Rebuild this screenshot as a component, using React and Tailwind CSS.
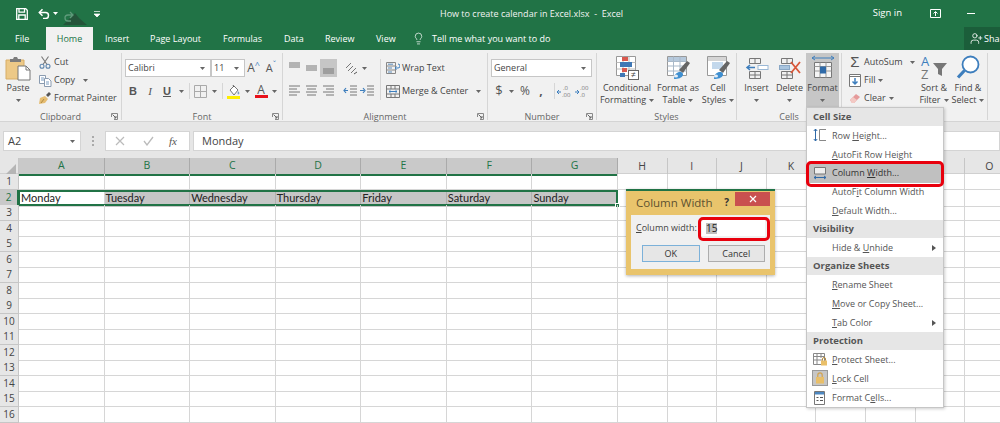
import { Lightbulb, UserPlus } from "lucide-react";

const columns = ["A", "B", "C", "D", "E", "F", "G", "H", "I", "J", "K", "L", "M", "N", "O"];
const days = ["Monday", "Tuesday", "Wednesday", "Thursday", "Friday", "Saturday", "Sunday"];
const rows = [1, 2, 3, 4, 5, 6, 7, 8, 9, 10, 11, 12, 13, 14, 15, 16];

function Caret({ light }) {
  return (
    <svg width="5" height="3" viewBox="0 0 5 3" className="shrink-0">
      <path d="M0 0h5L2.5 3z" fill={light ? "#fff" : "#666"} />
    </svg>
  );
}

function CaretCell() {
  return <div className="w-[8px] h-full flex items-center justify-center"><Caret /></div>;
}

function Cell({ children }) {
  return <div className="w-[16px] h-full flex items-center justify-center shrink-0">{children}</div>;
}

function Launcher() {
  return (
    <svg width="7" height="7" viewBox="0 0 7 7" className="absolute right-[3px] top-[3px]">
      <path d="M.5 4V.5H6.5V6.500H3" fill="none" stroke="#888" />
      <path d="M1.500 1.500L5 5M5 3v2H3" fill="none" stroke="#666" />
    </svg>
  );
}

function Group({ label, launcher, width, children }) {
  return (
    <div className={`${width} h-[67px] border-r border-[#d6d6d6] flex flex-col shrink-0`}>
      <div className="h-[57px] flex">{children}</div>
      <div className="relative h-[10px] leading-[13px] text-center text-[#666]">
        {label}
        {launcher && <Launcher />}
      </div>
    </div>
  );
}

function SmallRow({ icon, children, className = "" }) {
  return (
    <div className={`h-[18px] flex items-center whitespace-nowrap text-[#444] ${className}`}>
      <div className="w-[14px] h-[14px] mr-[2px] flex items-center justify-center shrink-0">{icon}</div>
      {children}
    </div>
  );
}

function BigButton({ icon, width, lines, caret = true, inlineCaret = false, active = false }) {
  return (
    <div className={`${width} ${active ? "bg-[#c6c6c6]" : ""} h-[54px] pt-[2px] flex flex-col items-center text-[#444] leading-[12px] shrink-0`}>
      <div className="h-[26px] flex items-center">{icon}</div>
      <div className="mt-[1px] text-center whitespace-nowrap">{lines[0]}</div>
      {lines[1] ? (
        <div className="flex items-center gap-[3px] whitespace-nowrap">
          {lines[1]}
          {inlineCaret && <Caret />}
        </div>
      ) : (
        caret && <div className="h-[12px] flex items-center"><Caret /></div>
      )}
    </div>
  );
}

function Lines({ top = false, mid = false, bottom = false, align = "left" }) {
  const rowsY = top ? [2, 4, 6] : mid ? [5, 7, 9] : bottom ? [8, 10, 12] : [2, 5, 8, 11];
  return (
    <svg width="13" height="14" viewBox="0 0 13 14">
      {rowsY.map((y, i) => {
        const short = rowsY.length === 4 && i % 2 === 1;
        const x1 = align === "right" && short ? 4 : align === "center" && short ? 2 : 1;
        const x2 = align === "left" && short ? 9 : align === "center" && short ? 11 : 12;
        return <line key={y} x1={x1} x2={x2} y1={y} y2={y} stroke="#777" />;
      })}
    </svg>
  );
}

function SaveIcon() {
  return (
    <svg width="12" height="12" viewBox="0 0 12 12" fill="none" stroke="#fff" strokeWidth="1.3">
      <path d="M.7.7h9l1.600 1.600v9H.7z" />
      <path d="M3 .7v3.500h5.500V.7M2.800 11.200V7h6.400v4.200" />
    </svg>
  );
}

function UndoIcon() {
  return (
    <svg width="12" height="11" viewBox="0 0 12 11" fill="none" stroke="#fff" strokeWidth="1.5">
      <path d="M1.500 4.500h6a3 3 0 0 1 0 6H5" />
      <path d="M4.500 1.200L1.300 4.500l3.200 3.200" />
    </svg>
  );
}

function RedoIcon() {
  return (
    <svg width="26" height="14" viewBox="0 0 26 14" fill="none">
      <path d="M1 14L8 7 13 2 17 7 25 14z" fill="#24543a" />
      <path d="M10 4H6a3 3 0 0 0 0 6h3M8 1l3 3-3 3" stroke="#5e9a7a" strokeWidth="1.3" />
    </svg>
  );
}

function PasteIcon() {
  return (
    <svg width="26" height="25" viewBox="0 0 26 25">
      <path d="M1 4h18v19H1z" fill="#edc987" stroke="#d7ad66" />
      <path d="M5 3h3l1-2h3l1 2h3v3H5z" fill="#7c7c7c" />
      <path d="M13 10h8l4 4v10H13z" fill="#fff" stroke="#777" />
      <path d="M21 10v4h4" fill="none" stroke="#777" />
    </svg>
  );
}

function CutIcon() {
  return (
    <svg width="12" height="13" viewBox="0 0 12 13" fill="none" stroke="#5f86ad" strokeWidth="1.1">
      <path d="M2.500 .5L8 8.500M9.500 .5L4 8.500" stroke="#777" />
      <circle cx="3" cy="10.300" r="2" />
      <circle cx="9" cy="10.300" r="2" />
    </svg>
  );
}

function CopyIcon() {
  return (
    <svg width="13" height="13" viewBox="0 0 13 13" fill="#fff" stroke="#8a9bb0">
      <path d="M.5 1.500h6v8h-6z" />
      <path d="M5.500 4.500h4l2.500 2.500v5.500H5.500z" />
      <path d="M2 4h3M2 6h3M7 8h3M7 10h3" stroke="#7a9cc0" />
    </svg>
  );
}

function PainterIcon() {
  return (
    <svg width="14" height="13" viewBox="0 0 14 13">
      <path d="M1 12l1-6 5-2 3 3-3 4z" fill="#e5bd72" />
      <path d="M8 3l2 2 3-3-2-2z" fill="#555" />
      <path d="M3 11l3-4" stroke="#b08a42" fill="none" />
    </svg>
  );
}

function BordersIcon() {
  return (
    <svg width="13" height="13" viewBox="0 0 13 13" fill="none" stroke="#aaa">
      <path d="M.5.500h12v12H.5zM6.500.5v12M.5 6.500h12" />
    </svg>
  );
}

function FillIcon() {
  return (
    <svg width="14" height="15" viewBox="0 0 14 15">
      <path d="M3 6l4-4 4 4-4 5z" fill="#fff" stroke="#777" />
      <path d="M6 1l1 2" stroke="#555" />
      <path d="M11 7c1 1.300 2 2 1 3s-2 0-1-3z" fill="#7c9cbc" />
      <rect x="0" y="12" width="13" height="3" fill="#ffee00" />
    </svg>
  );
}

function OrientIcon() {
  return (
    <svg width="13" height="13" viewBox="0 0 13 13" fill="none" stroke="#777">
      <path d="M1 6l5-5M3 9l5-5M6 11l5-5" />
      <path d="M9 12l3-2" stroke="#555" />
    </svg>
  );
}

function IndentIcon({ flip }) {
  return (
    <svg width="14" height="12" viewBox="0 0 14 12" fill="none">
      <path d="M7 1h7M7 4h7M7 7h7M7 10h7" stroke="#777" />
      {flip ? (
        <path d="M0 5.500h4M3 3l2 2.500L3 8" stroke="#3d7ebd" strokeWidth="1.200" />
      ) : (
        <path d="M5 5.500H1M3 3L1 5.500 3 8" stroke="#3d7ebd" strokeWidth="1.200" />
      )}
    </svg>
  );
}

function WrapIcon() {
  return (
    <svg width="14" height="13" viewBox="0 0 14 13" fill="none" stroke="#888">
      <path d="M.5.500h9v11h-9zM.5 4h9M.5 8h9" />
      <path d="M2 2.200h5M2 6h4M2 10h4" stroke="#5b8bbb" />
      <path d="M9 6h3a1 1 0 0 0 0-4M10.500 4.500L9 6l1.500 1.500" stroke="#3d7ebd" />
    </svg>
  );
}

function MergeIcon() {
  return (
    <svg width="14" height="13" viewBox="0 0 14 13" fill="none" stroke="#777">
      <path d="M.5.500h13v12H.5zM.5 4h13M.5 9h13M5 .5V4M9 .5V4M5 9v3.500M9 9v3.500" />
      <path d="M3 6.500h8M4.500 5.200L3 6.500l1.500 1.300M9.500 5.200L11 6.500 9.500 7.800" stroke="#3d7ebd" />
    </svg>
  );
}

function DecimalIcon({ more }) {
  return (
    <svg width="16" height="14" viewBox="0 0 16 14">
      <text x={more ? 5 : 6} y="6" fontSize="6" fill="#777">{more ? ".00" : ".0"}</text>
      <text x="5" y="13" fontSize="6" fill="#777">{more ? ".0" : ".00"}</text>
      <path d="M0 8h4M2 6l-2 2 2 2" fill="none" stroke="#3d7ebd" transform={more ? "rotate(180 2 8)" : undefined} />
    </svg>
  );
}

function TableBase({ children }) {
  return (
    <svg width="26" height="26" viewBox="0 0 26 26">
      <path d="M2.500 1.500h19v19h-19z" fill="#fff" stroke="#999" />
      {children}
    </svg>
  );
}

function ConditionalIcon() {
  return (
    <TableBase>
      <path d="M2.500 7.500h19M2.500 14h19M9 1.500v19M15 1.500v19" stroke="#bbb" fill="none" />
      <rect x="8" y="2" width="6" height="4" fill="#d9584e" />
      <rect x="6" y="7" width="12" height="5" fill="#3f77b5" />
      <rect x="8" y="13" width="5" height="4" fill="#d9584e" />
      <rect x="6" y="18" width="5" height="4" fill="#3f77b5" />
      <rect x="14.500" y="15.500" width="10" height="9" fill="#fff" stroke="#666" />
      <text x="16.500" y="23" fontSize="9" fill="#444">≠</text>
    </TableBase>
  );
}

function Brush() {
  return (
    <>
      <path d="M14 15L22 6l3 2-7 10z" fill="#666" />
      <path d="M9 24c0-5 3-7 6-7s3 2 3 3c-1 3-5 4-9 4z" fill="#3f8fd0" />
      <ellipse cx="11" cy="21" rx="2" ry="1.500" fill="#e4eef7" />
    </>
  );
}

function FormatTableIcon() {
  return (
    <TableBase>
      <rect x="3" y="2" width="18" height="4" fill="#b6c9dc" />
      <path d="M2.500 6.500h19M2.500 11h19M2.500 16h19M8.500 1.500v19M15 1.500v19" stroke="#a9b9c9" fill="none" />
      <Brush />
    </TableBase>
  );
}

function CellStylesIcon() {
  return (
    <TableBase>
      <rect x="3" y="2" width="18" height="4" fill="#d5d5d5" />
      <rect x="7" y="7" width="11" height="7" fill="#c3d8ec" />
      <Brush />
    </TableBase>
  );
}

function InsertIcon() {
  return (
    <svg width="24" height="24" viewBox="0 0 24 24" fill="none">
      <path d="M4.500 2.500h11v5h-11zM10 2.500v5M4.500 15.500h11v7h-11zM10 15.500v7M4.500 19h11" stroke="#777" />
      <rect x="13" y="9.500" width="10" height="4" fill="#fff" stroke="#9ab8d6" />
      <path d="M2 11.500h8M5 9L2 11.500 5 14" stroke="#3d7ebd" strokeWidth="1.500" />
    </svg>
  );
}

function DeleteIcon() {
  return (
    <svg width="24" height="24" viewBox="0 0 24 24" fill="none">
      <path d="M3.500 2.500h11v5h-11zM9 2.500v5M3.500 15.500h11v7h-11zM9 15.500v7M3.500 19h11" stroke="#777" />
      <rect x="1.500" y="9.500" width="10" height="4" fill="#a9c4de" stroke="#8aa8c6" />
      <path d="M13 6l9 11M22 6l-9 11" stroke="#d9583a" strokeWidth="1.800" />
    </svg>
  );
}

function FormatIcon() {
  return (
    <svg width="24" height="26" viewBox="0 0 24 26" fill="none">
      <path d="M1 3h22M1 3l3-2M1 3l3 2M23 3l-3-2M23 3l-3 2" stroke="#3d7ebd" />
      <path d="M3.500 7.500h17v15h-17z" fill="#f5f5f5" stroke="#777" />
      <path d="M3.500 11.500h17M3.500 16h17M9 7.500v15M15 7.500v15" stroke="#999" />
      <rect x="9" y="11.500" width="6" height="7" fill="#2f6aa8" />
    </svg>
  );
}

function FillDownIcon() {
  return (
    <svg width="12" height="13" viewBox="0 0 12 13" fill="none">
      <path d="M.5.500h11v12H.5z" fill="#fff" stroke="#777" />
      <path d="M.5 2.500h11" stroke="#777" />
      <path d="M6 4v6M3.500 7.500L6 10l2.500-2.500" stroke="#3d7ebd" strokeWidth="1.500" />
    </svg>
  );
}

function EraserIcon() {
  return (
    <svg width="12" height="12" viewBox="0 0 12 12">
      <path d="M1 8l6-6 4 3-6 6H3z" fill="#e59a9a" />
      <path d="M1 8l3-3 4 3-3 3H3z" fill="#f3c9c4" />
    </svg>
  );
}

function SortIcon() {
  return (
    <svg width="28" height="26" viewBox="0 0 28 26">
      <text x="1" y="11" fontSize="13" fill="#3d7ebd" fontFamily="Open Sans, sans-serif">A</text>
      <text x="1" y="24" fontSize="13" fill="#777" fontFamily="Open Sans, sans-serif">Z</text>
      <path d="M13 8h14l-5 6v7l-4-2v-5z" fill="#777" />
    </svg>
  );
}

function FindIcon() {
  return (
    <svg width="24" height="26" viewBox="0 0 24 26" fill="none" stroke="#3d7ebd">
      <circle cx="14.500" cy="9.500" r="8" fill="#fff" strokeWidth="1.800" />
      <path d="M8.500 15.500L2 22.500" strokeWidth="3.200" />
    </svg>
  );
}

function RowHeightIcon() {
  return (
    <svg width="14" height="14" viewBox="0 0 14 14" fill="none">
      <path d="M13 1.500H6.500v11H13" stroke="#888" />
      <path d="M2.500 1v12M.8 3l1.700-2 1.700 2M.8 11l1.700 2 1.700-2" stroke="#2f6aa8" />
    </svg>
  );
}

function ColWidthIcon() {
  return (
    <svg width="14" height="14" viewBox="0 0 14 14" fill="none">
      <path d="M1.500 8V1.500h11V8z" fill="#eee" stroke="#777" />
      <path d="M1 11.500h12M1 11.500l2-1.500M1 11.500L3 13M13 11.500L11 10M13 11.500L11 13" stroke="#2f6aa8" />
    </svg>
  );
}

function ProtectIcon() {
  return (
    <svg width="14" height="14" viewBox="0 0 14 14" fill="none">
      <path d="M.5 1.500h11v11H.5zM.5 4.500h11M.5 8h9M4 1.500v11M8 1.500V6" stroke="#888" />
      <rect x="8" y="8.500" width="6" height="5" fill="#e9bf69" />
      <path d="M9.500 8.500V7a1.500 1.500 0 0 1 3 0v1.500" stroke="#b58a3a" />
    </svg>
  );
}

function LockIcon() {
  return (
    <svg width="10" height="12" viewBox="0 0 10 12" fill="none">
      <rect x="1" y="5" width="8" height="6.500" fill="#e9bf69" />
      <path d="M2.800 5V3a2.200 2.200 0 0 1 4.400 0v2" stroke="#d2a24e" strokeWidth="1.200" />
    </svg>
  );
}

function FormatCellsIcon() {
  return (
    <svg width="13" height="14" viewBox="0 0 13 14" fill="none">
      <path d="M1.500.500h10v13h-10z" fill="#fff" stroke="#777" />
      <rect x="2" y="1" width="9" height="2.500" fill="#4d87c0" />
      <path d="M3.500 6.500h2M7 6.500h3M3.500 9.500h2M7 9.500h3" stroke="#555" />
    </svg>
  );
}

function TitleBar() {
  return (
    <div className="h-[27px] bg-[#217346] text-white flex items-center shrink-0">
      <div className="ml-[16px]"><SaveIcon /></div>
      <div className="ml-[10px]"><UndoIcon /></div>
      <div className="ml-[3px]"><Caret light /></div>
      <div className="ml-[4px] mt-[8px]"><RedoIcon /></div>
      <div className="ml-[6px]"><svg width="6" height="6" viewBox="0 0 6 6"><path d="M0 .5h6M0 3h6L3 6z" stroke="#fff" fill="#fff" strokeWidth=".7" /></svg></div>
      <div className="ml-[340px] whitespace-nowrap text-[#f2f2f2]">
        How to create calendar in Excel.xlsx&nbsp; - &nbsp;Excel
      </div>
      <div className="ml-auto flex items-center">
        <span className="text-[9.500px]">Sign in</span>
        <svg width="11" height="9" viewBox="0 0 11 9" className="ml-[28px]" fill="none" stroke="#fff">
          <path d="M.5.500h10v8H.5z" />
          <path d="M5.500 7V3M3.500 4.500l2-2 2 2" />
        </svg>
        <div className="ml-[26px] mr-[25px] w-[8px] h-px bg-white" />
      </div>
    </div>
  );
}

function TabBar() {
  return (
    <div className="h-[23px] bg-[#217346] text-white flex items-center shrink-0 whitespace-nowrap">
      <span className="ml-[15px] w-[31px]">File</span>
      <div className="w-[47px] h-full bg-[#f1f1f1] text-[#217346] flex items-center justify-center">Home</div>
      <span className="ml-[12px] w-[45px]">Insert</span>
      <span className="w-[73px]">Page Layout</span>
      <span className="w-[61px]">Formulas</span>
      <span className="w-[41px]">Data</span>
      <span className="w-[51px]">Review</span>
      <span className="w-[36px]">View</span>
      <Lightbulb size={13} strokeWidth={1.300} />
      <span className="ml-[7px]">Tell me what you want to do</span>
      <div className="ml-auto w-[36px] h-full bg-[#1b5e3a] flex items-center pl-[6px] overflow-hidden">
        <UserPlus size={13} strokeWidth={1.500} className="shrink-0" />
        <span className="ml-px">Share</span>
      </div>
    </div>
  );
}

function Select({ width, label }) {
  return (
    <div className={`${width} h-[18px] bg-white border border-[#c6c6c6] flex items-center justify-between pl-[2px] pr-[5px] text-[#444]`}>
      {label}
      <Caret />
    </div>
  );
}

function Ribbon() {
  return (
    <div className="h-[72px] bg-[#f1f1f1] border-b border-[#d4d4d4] pt-[3px] flex shrink-0">
      <Group label="Clipboard" launcher width="w-[122px]">
        <BigButton width="w-[36px]" icon={<PasteIcon />} lines={["Paste"]} />
        <div className="ml-[2px]">
          <SmallRow icon={<CutIcon />}>Cut</SmallRow>
          <SmallRow icon={<CopyIcon />}>Copy<span className="ml-[8px]"><Caret /></span></SmallRow>
          <SmallRow icon={<PainterIcon />}>Format Painter</SmallRow>
        </div>
      </Group>

      <Group label="Font" launcher width="w-[161px]">
        <div className="pl-[3px] pt-[6px] flex flex-col gap-[5px]">
          <div className="h-[18px] flex items-center">
            <Select width="w-[86px]" label="Calibri" />
            <Select width="w-[34px]" label="11" />
            <div className="w-[17px] text-center text-[12px] text-[#555]">A<sup className="text-[#3d7ebd]">^</sup></div>
            <div className="w-[18px] text-center text-[11px] text-[#555]">A<sup className="text-[#3d7ebd]">ˇ</sup></div>
          </div>
          <div className="h-[18px] flex items-center text-[#555]">
            <Cell><b className="text-[11px] font-['Liberation_Sans',sans-serif]">B</b></Cell>
            <div className="ml-px h-full"><Cell><i className="text-[11px] font-['Liberation_Serif',serif]">I</i></Cell></div>
            <div className="ml-px h-full"><Cell><span className="text-[11px] font-bold underline font-['Liberation_Sans',sans-serif]">U</span></Cell></div>
            <div className="ml-[2px] h-full"><CaretCell /></div>
            <div className="ml-[4px] w-px h-[16px] bg-[#d6d6d6]" />
            <div className="ml-[2px] h-full"><Cell><BordersIcon /></Cell></div>
            <div className="ml-[2px] h-full"><CaretCell /></div>
            <div className="ml-[4px] w-px h-[16px] bg-[#d6d6d6]" />
            <div className="ml-[3px] h-full"><Cell><FillIcon /></Cell></div>
            <div className="ml-px h-full"><CaretCell /></div>
            <div className="ml-[2px] h-full">
              <Cell>
                <div className="flex flex-col items-center leading-[11px] text-[12px] text-[#555]">
                  A<div className="w-[13px] h-[3px] bg-[#e8121b]" />
                </div>
              </Cell>
            </div>
            <div className="ml-px h-full"><CaretCell /></div>
          </div>
        </div>
      </Group>

      <Group label="Alignment" launcher width="w-[205px]">
        <div className="pl-[3px] pt-[6px] flex flex-col gap-[5px] w-[94px]">
          <div className="h-[18px] flex items-center">
            <div className="w-[17px] flex justify-center"><Lines top /></div>
            <div className="w-[17px] flex justify-center"><Lines mid /></div>
            <div className="w-[17px] h-full bg-[#c6c6c6] flex items-center justify-center"><Lines bottom /></div>
            <div className="ml-[8px]"><OrientIcon /></div>
            <div className="ml-[4px]"><Caret /></div>
          </div>
          <div className="h-[18px] flex items-center">
            <div className="w-[17px] flex justify-center"><Lines /></div>
            <div className="w-[17px] flex justify-center"><Lines align="center" /></div>
            <div className="w-[17px] flex justify-center"><Lines align="right" /></div>
            <div className="ml-[6px] w-[17px]"><IndentIcon /></div>
            <div className="w-[17px]"><IndentIcon flip /></div>
          </div>
        </div>
        <div className="ml-[3px] mt-[6px] w-px h-[41px] bg-[#d6d6d6]" />
        <div className="ml-[5px] pt-[6px] flex flex-col gap-[5px]">
          <SmallRow icon={<WrapIcon />}>Wrap Text</SmallRow>
          <SmallRow icon={<MergeIcon />}>Merge &amp; Center<span className="ml-[8px]"><Caret /></span></SmallRow>
        </div>
      </Group>

      <Group label="Number" launcher width="w-[109px]">
        <div className="pl-[3px] pt-[6px] flex flex-col gap-[5px]">
          <Select width="w-[101px]" label="General" />
          <div className="h-[18px] flex items-center text-[#555]">
            <Cell><span className="text-[13px]">$</span></Cell>
            <CaretCell />
            <div className="ml-[2px] h-full"><Cell><span className="text-[12px]">%</span></Cell></div>
            <Cell><b className="text-[12px]">,</b></Cell>
            <div className="ml-[5px] w-px h-[16px] bg-[#d6d6d6]" />
            <div className="ml-[2px] h-full"><Cell><DecimalIcon /></Cell></div>
            <div className="ml-[2px] h-full"><Cell><DecimalIcon more /></Cell></div>
          </div>
        </div>
      </Group>

      <Group label="Styles" width="w-[140px]">
        <BigButton width="w-[60px]" icon={<ConditionalIcon />} lines={["Conditional", "Formatting"]} inlineCaret />
        <BigButton width="w-[42px]" icon={<FormatTableIcon />} lines={["Format as", "Table"]} inlineCaret />
        <BigButton width="w-[38px]" icon={<CellStylesIcon />} lines={["Cell", "Styles"]} inlineCaret />
      </Group>

      <Group label="Cells" width="w-[105px]">
        <div className="w-[3px]" />
        <BigButton width="w-[33px]" icon={<InsertIcon />} lines={["Insert"]} />
        <BigButton width="w-[33px]" icon={<DeleteIcon />} lines={["Delete"]} />
        <BigButton width="w-[33px]" icon={<FormatIcon />} lines={["Format"]} active />
      </Group>

      <Group label="Editing" width="w-[146px]">
        <div className="w-[74px] pl-[6px]">
          <SmallRow icon={<span className="text-[15px] font-['Liberation_Sans',sans-serif] text-[#555]">Σ</span>}>AutoSum<span className="ml-[7px]"><Caret /></span></SmallRow>
          <SmallRow icon={<FillDownIcon />}>Fill<span className="ml-[3px]"><Caret /></span></SmallRow>
          <SmallRow icon={<EraserIcon />}>Clear<span className="ml-[3px]"><Caret /></span></SmallRow>
        </div>
        <BigButton width="w-[36px]" icon={<SortIcon />} lines={["Sort &", "Filter"]} inlineCaret />
        <BigButton width="w-[32px]" icon={<FindIcon />} lines={["Find &", "Select"]} inlineCaret />
      </Group>
    </div>
  );
}

function FormulaBar() {
  return (
    <div className="h-[36px] bg-[#e6e6e6] pt-[9px] flex text-[#444] shrink-0">
      <div className="ml-[3px] w-[78px] h-[20px] bg-white border border-[#d4d4d4] flex items-center justify-between pl-[4px] pr-[5px] text-[11px]">
        A2
        <Caret />
      </div>
      <div className="ml-[11px] w-[3px] h-[10px] mt-[5px] border-l-2 border-dotted border-[#aaa]" />
      <div className="ml-[10px] w-[85px] h-[20px] bg-white border border-[#d4d4d4] flex items-center text-[#bbb]">
        <svg width="10" height="10" viewBox="0 0 10 10" className="ml-[9px]" fill="none" stroke="#bbb" strokeWidth="1.200"><path d="M1 1l8 8M9 1L1 9" /></svg>
        <svg width="11" height="10" viewBox="0 0 11 10" className="ml-[18px]" fill="none" stroke="#bbb" strokeWidth="1.300"><path d="M1 5l3 4 6-8" /></svg>
        <i className="ml-[15px] text-[#555] font-['Liberation_Serif',serif] text-[11px]">fx</i>
      </div>
      <div className="ml-[3px] flex-1 h-[20px] bg-white border border-[#d4d4d4] flex items-center pl-[8px] text-[11px]">Monday</div>
    </div>
  );
}

function Sheet() {
  return (
    <div className="flex-1 bg-white overflow-hidden font-['Lato',sans-serif]">
      <div className="grid grid-cols-[19px_repeat(7,85.57px)_repeat(8,49.6px)] h-[16px] bg-[#e6e6e6] border-b border-[#d0d0d0]">
        <div className="border-r border-[#c6c6c6] flex items-end justify-end pr-[2px] pb-[2px]">
          <svg width="10" height="10" viewBox="0 0 10 10"><path d="M10 0v10H0z" fill="#b5b5b5" /></svg>
        </div>
        {columns.map((col, i) => (
          <div
            key={col}
            className={i < 7
              ? "bg-[#c9c9c9] text-[#217346] border-r border-[#aaa] border-b-2 border-b-[#217346] flex items-center justify-center text-[10.500px] font-['Open_Sans',sans-serif]"
              : "text-[#444] border-r border-[#c6c6c6] flex items-center justify-center text-[10.500px] font-['Open_Sans',sans-serif]"}
          >
            {col}
          </div>
        ))}
      </div>
      {rows.map((row) => (
        <div key={row} className="relative grid grid-cols-[19px_repeat(7,85.57px)_repeat(8,49.6px)] h-[15.5px]">
          <div className={row === 2
            ? "bg-[#c9c9c9] text-[#217346] border-r-2 border-r-[#217346] border-b border-[#aaa] flex items-center justify-center text-[10px] font-['Open_Sans',sans-serif]"
            : "bg-[#e6e6e6] text-[#444] border-r border-b border-[#c6c6c6] flex items-center justify-center text-[10px] font-['Open_Sans',sans-serif]"}
          >
            {row}
          </div>
          {columns.map((col, i) => (
            <div
              key={col}
              className={row === 2 && i > 0 && i < 7
                ? "bg-[#c6c6c6] border-r border-[#b0b0b0] flex items-center pl-[1px] text-[11px] text-[#222] whitespace-nowrap"
                : "border-r border-b border-[#d6d6d6] flex items-center pl-[2px] text-[11px] text-[#222] whitespace-nowrap"}
            >
              {row === 2 && days[i]}
            </div>
          ))}
          {row === 2 && (
            <div className="absolute left-[18px] top-0 w-[600px] h-[16.500px] border-2 border-[#217346] pointer-events-none">
              <div className="absolute right-[-4px] bottom-[-4px] w-[5px] h-[5px] bg-[#217346] border border-white" />
            </div>
          )}
        </div>
      ))}
    </div>
  );
}

function ColumnDialog() {
  return (
    <div className="absolute left-[626px] top-[189px] w-[149px] h-[86px] bg-[#e9c46c] border-t-2 border-[#217346] px-[5px] shadow-[0_1px_3px_rgba(0,0,0,0.3)]">
      <div className="h-[24px] flex items-start whitespace-nowrap">
        <span className="ml-[5px] w-[90px] mt-[3px] text-[11.500px] leading-[18px] text-[#5d5130]">Column Width</span>
        <b className="mt-[4px] w-[6px] text-[10px] leading-[14px] text-[#333]">?</b>
        <div className="ml-[5px] mt-px w-[35px] h-[14px] bg-[#c9504f] text-white flex items-center justify-center shrink-0">
          <svg width="8" height="8" viewBox="0 0 8 8" stroke="#fff" strokeWidth="1.200"><path d="M1 1l6 6M7 1L1 7" /></svg>
        </div>
      </div>
      <div className="h-[54px] bg-[#f0f0f0] px-[5px] pt-[5px]">
        <div className="h-[16px] flex items-center text-[#444] whitespace-nowrap">
          <span className="w-[66px] shrink-0"><span className="underline">C</span>olumn width:</span>
          <div className="w-[63px] h-[16px] bg-white flex items-center pl-[4px] shrink-0">
            <span className="bg-[#bfbfbf] text-[#222] text-[10px] leading-[11px]">15</span>
          </div>
        </div>
        <div className="mt-[9px] flex">
          <div className="ml-[6px] w-[58px] h-[17px] bg-[#e6e6e6] border border-[#7cb1d9] flex items-center justify-center text-[#333]">OK</div>
          <div className="ml-[8px] w-[58px] h-[17px] bg-[#e6e6e6] border border-[#adadad] flex items-center justify-center text-[#333]">Cancel</div>
        </div>
      </div>
    </div>
  );
}

function MenuHeader({ children }) {
  return <div className="h-[18px] bg-[#e6e6e6] flex items-center pl-[6px] font-bold text-[9.500px] text-[#555]">{children}</div>;
}

function MenuItem({ icon, arrow, active, children }) {
  return (
    <div className={`h-[18.900px] flex items-center text-[#555] ${active ? "bg-[#c0c0c0]" : ""}`}>
      <div className="w-[25px] flex justify-center shrink-0">{icon}</div>
      {children}
      {arrow && (
        <svg width="4" height="6" viewBox="0 0 4 6" className="ml-auto mr-[7px]"><path d="M0 0l4 3-4 3z" fill="#555" /></svg>
      )}
    </div>
  );
}

function FormatMenu() {
  return (
    <div className="absolute left-[806px] top-[107px] w-[138px] h-[301px] bg-white border border-[#c6c6c6] shadow-[1px_1px_3px_rgba(0,0,0,0.2)]">
      <MenuHeader>Cell Size</MenuHeader>
      <MenuItem icon={<RowHeightIcon />}><span>Row <u>H</u>eight...</span></MenuItem>
      <MenuItem><span><u>A</u>utoFit Row Height</span></MenuItem>
      <MenuItem icon={<ColWidthIcon />} active><span className="text-[#333]">Column <u>W</u>idth...</span></MenuItem>
      <MenuItem><span>AutoF<u>i</u>t Column Width</span></MenuItem>
      <MenuItem><span><u>D</u>efault Width...</span></MenuItem>
      <MenuHeader>Visibility</MenuHeader>
      <MenuItem arrow><span>Hide &amp; <u>U</u>nhide</span></MenuItem>
      <MenuHeader>Organize Sheets</MenuHeader>
      <MenuItem><span><u>R</u>ename Sheet</span></MenuItem>
      <MenuItem><span><u>M</u>ove or Copy Sheet...</span></MenuItem>
      <MenuItem arrow><span><u>T</u>ab Color</span></MenuItem>
      <MenuHeader>Protection</MenuHeader>
      <MenuItem icon={<ProtectIcon />}><span><u>P</u>rotect Sheet...</span></MenuItem>
      <MenuItem
        icon={
          <div className="w-[16px] h-[16px] bg-[#c6c6c6] border border-[#999] flex items-center justify-center"><LockIcon /></div>
        }
      >
        <span><u>L</u>ock Cell</span>
      </MenuItem>
      <div className="ml-[25px] h-px bg-[#e0e0e0]" />
      <MenuItem icon={<FormatCellsIcon />}><span>Format C<u>e</u>lls...</span></MenuItem>
    </div>
  );
}

export default function App() {
  return (
    <div className="relative w-[1000px] h-[423px] overflow-hidden flex flex-col bg-white font-['Open_Sans',sans-serif] text-[9px]">
      <TitleBar />
      <TabBar />
      <Ribbon />
      <FormulaBar />
      <Sheet />

      <ColumnDialog />
      <FormatMenu />

      {/* red marks drawn on the screenshot */}
      <div className="absolute left-[806px] top-[161px] w-[138px] h-[26px] border-[3px] border-[#e8000d] rounded-[5px]" />
      <div className="absolute left-[698px] top-[217px] w-[72px] h-[24px] border-[3px] border-[#e8000d] rounded-[5px]" />
    </div>
  );
}
